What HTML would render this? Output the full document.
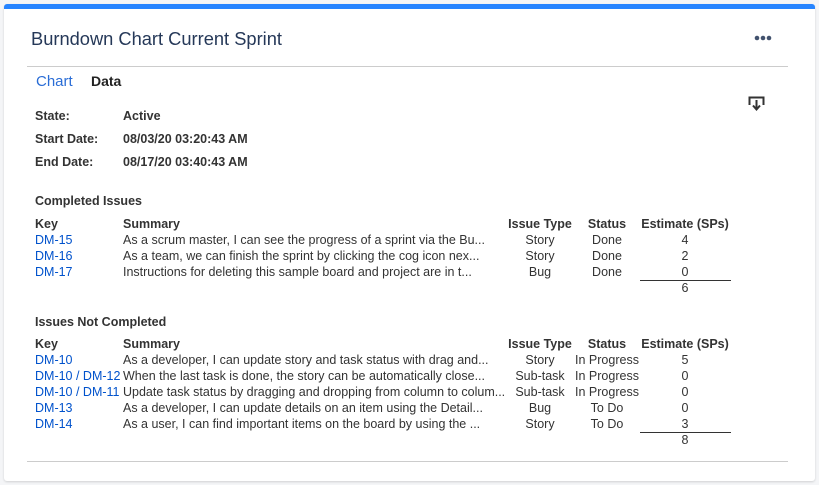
<!DOCTYPE html>
<html><head><style>
*{margin:0;padding:0;box-sizing:border-box}
body{width:819px;height:485px;background:#f4f5f7;font-family:"Liberation Sans",Arial,sans-serif;position:relative;overflow:hidden;color:#333}
.card{position:absolute;left:4px;top:4px;width:811px;height:477px;background:#fff;border-radius:3px;box-shadow:0 1px 2px rgba(0,0,0,.15);overflow:hidden}
.bar{position:absolute;left:0;top:0;width:100%;height:5px;background:#2684ff}
.a{position:absolute;white-space:nowrap}
.title{left:27px;top:24px;font-size:18.3px;color:#253858}
.hr{position:absolute;left:23px;width:761px;height:1px;background:#ccc}
.lnk{color:#0052cc}
.b{font-weight:bold}
.t{font-size:12.5px;line-height:16px}
.c{text-align:center}
</style></head><body>
<div class="card">
<div class="bar"></div>
<div class="a title">Burndown Chart Current Sprint</div>
<svg class="a" style="left:749px;top:30px" width="20" height="8"><circle cx="4" cy="4" r="2.3" fill="#42526e"/><circle cx="10" cy="4" r="2.3" fill="#42526e"/><circle cx="16" cy="4" r="2.3" fill="#42526e"/></svg>
<div class="hr" style="top:62px"></div>
<div class="a" style="left:32px;top:69px;font-size:15px;color:#2a6dd6">Chart</div>
<div class="a b" style="left:87px;top:69px;font-size:14px;color:#222">Data</div>
<svg class="a" style="left:744px;top:92px" width="18" height="16"><path d="M1.5 9V1.5h14V9" fill="none" stroke="#333" stroke-width="2"/><path d="M8.5 4v9M5 9.5l3.5 4 3.5-4" fill="none" stroke="#333" stroke-width="2"/></svg>
<div class="a t b" style="left:31px;top:104px">State:</div><div class="a t b" style="left:119px;top:104px">Active</div>
<div class="a t b" style="left:31px;top:127px">Start Date:</div><div class="a t b" style="left:119px;top:127px">08/03/20 03:20:43 AM</div>
<div class="a t b" style="left:31px;top:150px">End Date:</div><div class="a t b" style="left:119px;top:150px">08/17/20 03:40:43 AM</div>

<div class="a t b" style="left:31px;top:189px">Completed Issues</div>
<div class="a t" style="left:31px;top:212px;width:700px">
<div class="b" style="position:absolute;left:0">Key</div><div class="b" style="position:absolute;left:88px">Summary</div>
<div class="b c" style="position:absolute;left:470px;width:70px">Issue Type</div><div class="b c" style="position:absolute;left:537px;width:70px">Status</div><div class="b c" style="position:absolute;left:605px;width:90px">Estimate (SPs)</div>
</div>
<div class="a t" style="left:31px;top:228px;width:700px">
<div style="position:absolute;left:0" class="lnk">DM-15<br>DM-16<br>DM-17</div>
<div style="position:absolute;left:88px">As a scrum master, I can see the progress of a sprint via the Bu...<br>As a team, we can finish the sprint by clicking the cog icon nex...<br>Instructions for deleting this sample board and project are in t...</div>
<div class="c" style="position:absolute;left:470px;width:70px">Story<br>Story<br>Bug</div>
<div class="c" style="position:absolute;left:537px;width:70px">Done<br>Done<br>Done</div>
<div class="c" style="position:absolute;left:605px;width:90px">4<br>2<br>0<br>6</div>
</div>
<div class="a" style="left:636px;top:276px;width:91px;height:1px;background:#333"></div>

<div class="a t b" style="left:31px;top:310px">Issues Not Completed</div>
<div class="a t" style="left:31px;top:332px;width:700px">
<div class="b" style="position:absolute;left:0">Key</div><div class="b" style="position:absolute;left:88px">Summary</div>
<div class="b c" style="position:absolute;left:470px;width:70px">Issue Type</div><div class="b c" style="position:absolute;left:537px;width:70px">Status</div><div class="b c" style="position:absolute;left:605px;width:90px">Estimate (SPs)</div>
</div>
<div class="a t" style="left:31px;top:348px;width:700px">
<div style="position:absolute;left:0" class="lnk">DM-10<br>DM-10 / DM-12<br>DM-10 / DM-11<br>DM-13<br>DM-14</div>
<div style="position:absolute;left:88px">As a developer, I can update story and task status with drag and...<br>When the last task is done, the story can be automatically close...<br>Update task status by dragging and dropping from column to colum...<br>As a developer, I can update details on an item using the Detail...<br>As a user, I can find important items on the board by using the ...</div>
<div class="c" style="position:absolute;left:470px;width:70px">Story<br>Sub-task<br>Sub-task<br>Bug<br>Story</div>
<div class="c" style="position:absolute;left:537px;width:70px">In Progress<br>In Progress<br>In Progress<br>To Do<br>To Do</div>
<div class="c" style="position:absolute;left:605px;width:90px">5<br>0<br>0<br>0<br>3<br>8</div>
</div>
<div class="a" style="left:636px;top:428px;width:91px;height:1px;background:#333"></div>
<div class="hr" style="top:457px"></div>
</div>
</body></html>
